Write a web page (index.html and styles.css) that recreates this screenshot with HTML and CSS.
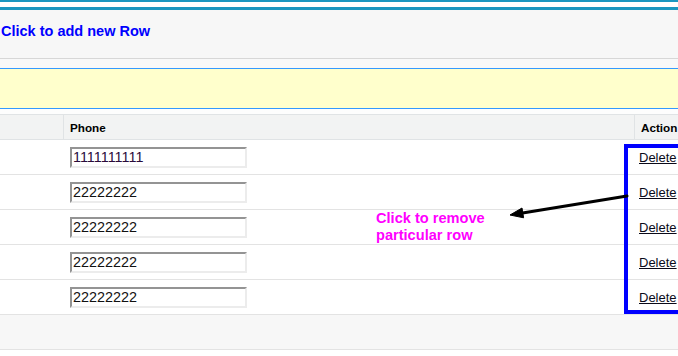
FILE: index.html
```html
<!DOCTYPE html>
<html>
<head>
<meta charset="utf-8">
<link rel="stylesheet" href="styles.css">
</head>
<body>
<div class="page">
  <div class="rule-thin"></div>
  <div class="rule-thick"></div>
  <div class="toolbar">
    <a class="add-row">Click to add new Row</a>
  </div>
  <div class="toolbar-gap"></div>
  <div class="message"></div>
  <div class="message-gap"></div>
  <div class="table">
    <div class="row head">
      <div class="cell"></div>
      <div class="cell th">Phone</div>
      <div class="cell th">Action</div>
    </div>
    <div class="row">
      <div class="cell"></div>
      <div class="cell phone"><input class="field first" type="text" value="1111111111"></div>
      <div class="cell action"><a class="del">Delete</a></div>
    </div>
    <div class="row">
      <div class="cell"></div>
      <div class="cell phone"><input class="field" type="text" value="22222222"></div>
      <div class="cell action"><a class="del">Delete</a></div>
    </div>
    <div class="row">
      <div class="cell"></div>
      <div class="cell phone"><input class="field" type="text" value="22222222"></div>
      <div class="cell action"><a class="del">Delete</a></div>
    </div>
    <div class="row">
      <div class="cell"></div>
      <div class="cell phone"><input class="field" type="text" value="22222222"></div>
      <div class="cell action"><a class="del">Delete</a></div>
    </div>
    <div class="row">
      <div class="cell"></div>
      <div class="cell phone"><input class="field" type="text" value="22222222"></div>
      <div class="cell action"><a class="del">Delete</a></div>
    </div>
    <div class="footer"></div>
  </div>

  <div class="callout-box"></div>
  <div class="callout-text">Click to remove<br>particular row</div>
  <svg class="callout-arrow" width="125" height="32" viewBox="0 0 125 32">
    <line x1="122" y1="6" x2="16" y2="23.2" stroke="#000" stroke-width="3" stroke-linecap="round"/>
    <polygon points="5,25 18.6,27.8 17,18" fill="#000" stroke="#000" stroke-width="1" stroke-linejoin="round"/>
  </svg>
</div>
</body>
</html>
```

FILE: styles.css
```css
html, body {
  margin: 0;
  padding: 0;
  background: #ffffff;
  overflow: hidden;
}

.page {
  position: relative;
  width: 678px;
  height: 356px;
  overflow: hidden;
  font-family: "Liberation Sans", Arial, sans-serif;
  color: #000;
}

.rule-thin {
  height: 2px;
  background: #1a96c0;
  margin-bottom: 5px;
}

.rule-thick {
  height: 3px;
  background: #1a96c0;
}

.toolbar {
  height: 36px;
  padding: 12px 0 0 1px;
  background: #f7f7f7;
  border-bottom: 1px solid #d7d7d7;
}

.add-row {
  font-size: 14.5px;
  line-height: 18px;
  font-weight: bold;
  color: #0000ff;
}

.toolbar-gap {
  height: 9px;
  background: #f8f8f8;
}

.message {
  height: 39px;
  background: #ffffcc;
  border-top: 1px solid #3399ff;
  border-bottom: 1px solid #3399ff;
}

.message-gap {
  height: 5px;
  background: #fdfdfd;
}

.table {
  width: 720px;
}

.row {
  display: grid;
  grid-template-columns: 63px 571px 1fr;
  height: 34px;
  border-bottom: 1px solid #e3e3e3;
}

.row.head {
  height: 24px;
  background: #f2f3f3;
  border-top: 1px solid #e0e3e5;
  border-bottom: 1px solid #e0e3e5;
}

.cell {
  display: flex;
  align-items: center;
  min-width: 0;
}

.th {
  border-left: 1px solid #e0e3e5;
  padding-left: 6px;
  font-size: 11.7px;
  font-weight: bold;
  color: #000;
}

.phone {
  padding-left: 7px;
}

.action {
  padding-left: 5px;
}

.field {
  box-sizing: border-box;
  width: 177px;
  height: 21px;
  margin: 0;
  padding: 0 0 0 1px;
  border-top: 2px solid #949494;
  border-left: 2px solid #949494;
  border-bottom: 2px solid #ececec;
  border-right: 2px solid #ececec;
  background: #fff;
  font-family: "Liberation Sans", Arial, sans-serif;
  font-size: 14.4px;
  color: #111;
  outline: none;
}

.field.first {
  color: #2a0a3a;
}

.del {
  font-size: 13px;
  color: #0a0a1a;
  text-decoration: underline;
}

.footer {
  height: 34px;
  background: #f7f7f7;
  border-bottom: 1px solid #e3e3e3;
}

.callout-box {
  position: absolute;
  left: 624px;
  top: 144px;
  width: 80px;
  height: 170px;
  box-sizing: border-box;
  border: 4px solid #0000ff;
}

.callout-text {
  position: absolute;
  left: 376px;
  top: 210px;
  font-size: 14.6px;
  line-height: 17px;
  font-weight: bold;
  color: #ff00ff;
}

.callout-arrow {
  position: absolute;
  left: 505px;
  top: 190px;
}
```
